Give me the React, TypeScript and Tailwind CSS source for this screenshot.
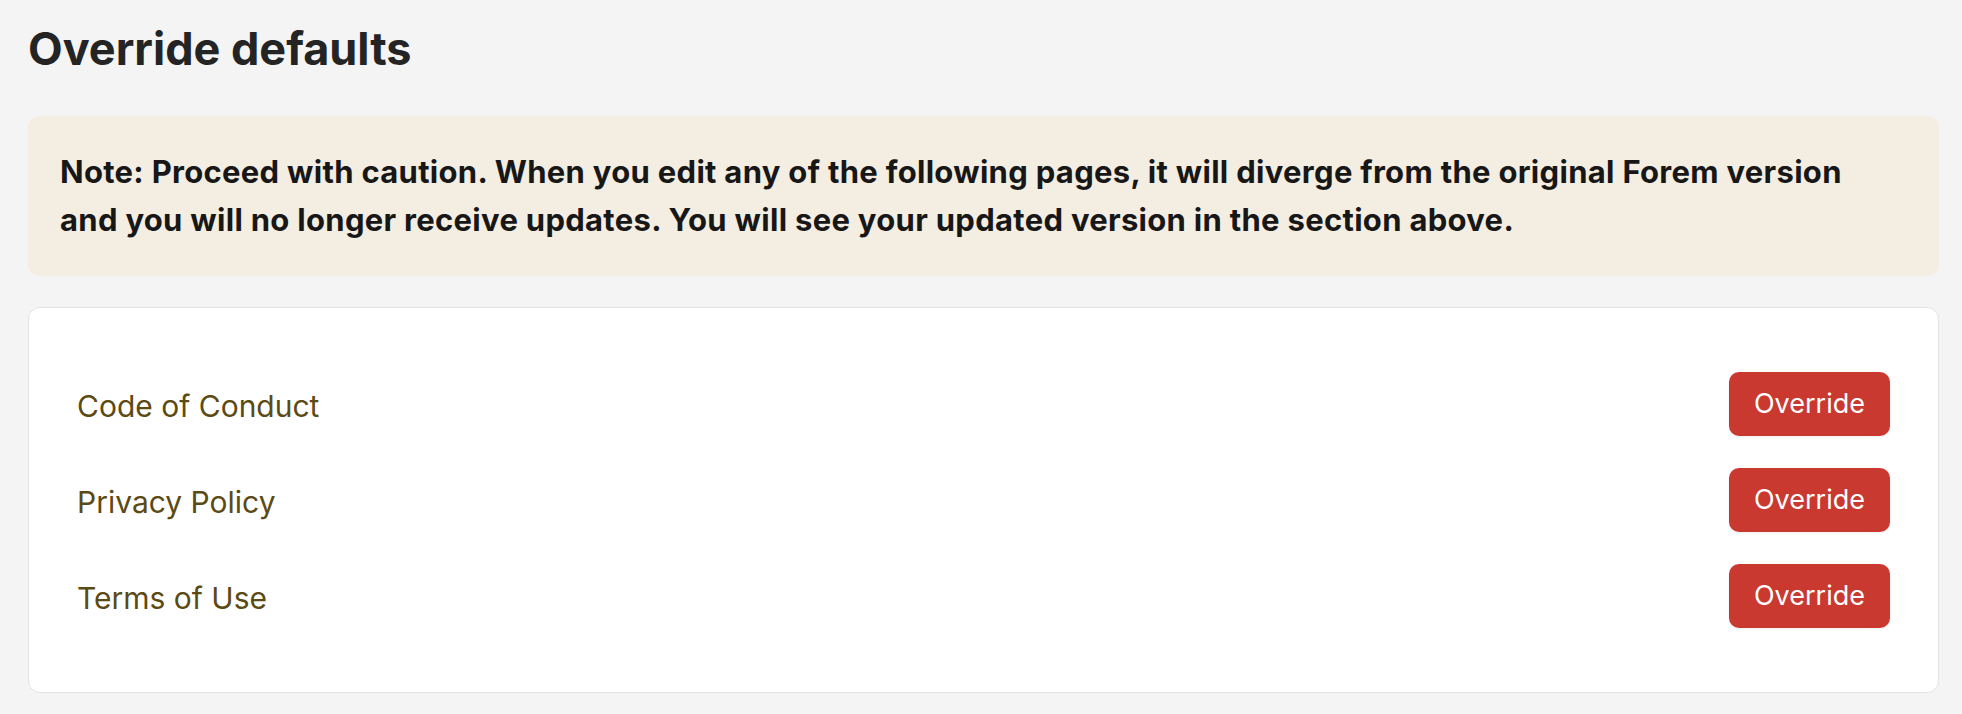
const pages = ['Code of Conduct', 'Privacy Policy', 'Terms of Use'];

export default function App() {
  return (
    <div
      className="min-h-screen bg-[#f4f4f4] pl-[28px] pr-[23px] pt-[21px]"
      style={{ fontFamily: 'Inter, "Noto Sans", sans-serif' }}
    >
      <h1 className="text-[45px] font-bold leading-[56px] text-[#242424]">
        Override defaults
      </h1>

      <div className="mt-[39px] rounded-[12px] bg-[#f4ede2] p-[32px]">
        <p className="text-[31px] font-bold leading-[48px] tracking-[0.3px] text-[#171717]">
          Note: Proceed with caution. When you edit any of the following pages,
          it will diverge from the original Forem version and you will no
          longer receive updates. You will see your updated version in the
          section above.
        </p>
      </div>

      <div className="mt-[31px] rounded-[12px] border border-[#e3e3e3] bg-white px-[48px] py-[64px]">
        <ul className="flex flex-col gap-[32px]">
          {pages.map(page => (
            <li key={page} className="flex h-[64px] items-center justify-between">
              <a href="#" className="pt-[5px] text-[30px] text-[#5c4a14]">
                {page}
              </a>
              <button
                type="button"
                className="h-[64px] rounded-[10px] bg-[#c9392f] px-[25px] text-[27px] text-white shadow-[0_1px_3px_rgba(0,0,0,0.08)]"
              >
                Override
              </button>
            </li>
          ))}
        </ul>
      </div>
    </div>
  );
}
